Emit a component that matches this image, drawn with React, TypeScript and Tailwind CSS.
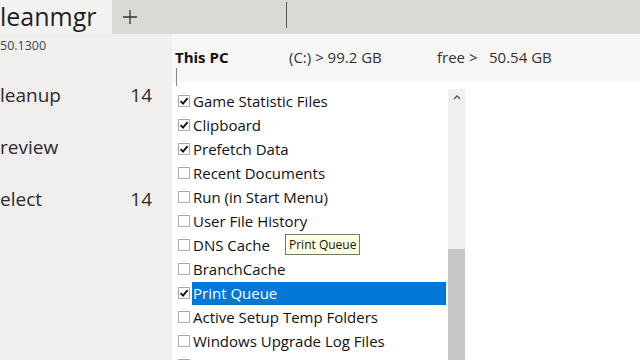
import React from 'react'

const ITEMS: { label: string; checked: boolean; selected?: boolean }[] = [
  { label: 'Game Statistic Files', checked: true },
  { label: 'Clipboard', checked: true },
  { label: 'Prefetch Data', checked: true },
  { label: 'Recent Documents', checked: false },
  { label: 'Run (in Start Menu)', checked: false },
  { label: 'User File History', checked: false },
  { label: 'DNS Cache', checked: false },
  { label: 'BranchCache', checked: false },
  { label: 'Print Queue', checked: true, selected: true },
  { label: 'Active Setup Temp Folders', checked: false },
  { label: 'Windows Upgrade Log Files', checked: false },
  { label: 'System Error Memory Dump Files', checked: false },
]

function Box({ checked }: { checked: boolean }) {
  return (
    <span className="w-[12px] h-[12px] border border-[#a9a9a9] bg-white flex items-center justify-center shrink-0">
      {checked && (
        <svg width="10" height="10" viewBox="0 0 10 10">
          <path d="M1.5 5.2 L4 7.6 L8.6 2.2" fill="none" stroke="#111" strokeWidth="1.8" />
        </svg>
      )}
    </span>
  )
}

function SideItem({ label, count }: { label: string; count?: string }) {
  return (
    <div className="h-[52px] flex items-center justify-between pr-[20px] text-[19px] text-[#2b2b2b]">
      <span>{label}</span>
      {count && <span>{count}</span>}
    </div>
  )
}

export default function App() {
  return (
    <div
      className="w-[640px] h-[360px] overflow-hidden flex flex-col bg-white"
      style={{ fontFamily: '"Open Sans", "Noto Sans", sans-serif' }}
    >
      {/* Tab strip */}
      <div className="h-[34px] bg-[#dad9d6] flex items-stretch shrink-0">
        <div className="w-[112px] bg-[#f3f2f1] flex items-center text-[25px] font-medium text-[#1f1f1f] leading-[34px] pb-[2px]">
          leanmgr
        </div>
        <div className="w-[36px] flex items-center justify-center">
          <svg width="16" height="16" viewBox="0 0 16 16">
            <path d="M8 1 V15 M1 8 H15" stroke="#333" strokeWidth="1.3" />
          </svg>
        </div>
        <div className="w-[138px]" />
        <div className="w-px bg-[#555] my-[2px] mb-[6px]" />
      </div>

      <div className="flex flex-1 min-h-0">
        {/* Sidebar */}
        <div className="w-[172px] bg-[#f0efed] flex flex-col shrink-0">
          <div className="h-[22px] flex items-center text-[12.5px] text-[#444] pt-[2px]">50.1300</div>
          <div className="h-[13px]" />
          <SideItem label="leanup" count="14" />
          <SideItem label="review" />
          <SideItem label="elect" count="14" />
        </div>

        {/* Main */}
        <div className="flex-1 flex flex-col min-w-0 bg-white">
          <div className="h-[48px] bg-[#f6f6f5] relative flex items-center text-[15px] text-[#333] pb-[1px]">
            <span className="font-bold text-[#111] ml-[3px] w-[114px]">This PC</span>
            <span className="w-[148px]">(C:) &gt; 99.2 GB</span>
            <span className="w-[52px]">free &gt;</span>
            <span>50.54 GB</span>
            <span className="absolute left-[4px] top-[34px] w-px h-[18px] bg-[#888]" />
          </div>
          <div className="h-[7px]" />
          <div className="flex flex-1 min-h-0">
            <div className="w-[274px] flex flex-col relative">
              {ITEMS.map((it) => (
                <div key={it.label} className="h-[24px] flex items-center shrink-0">
                  <div className="w-[20px] flex justify-end pr-[2px]">
                    <Box checked={it.checked} />
                  </div>
                  <div
                    className={
                      'flex-1 h-[23px] flex items-center pl-[1px] text-[15px] whitespace-nowrap ' +
                      (it.selected ? 'bg-[#0078d7] text-white' : 'text-[#111]')
                    }
                  >
                    {it.label}
                  </div>
                </div>
              ))}
              <div className="absolute left-[113px] top-[145px] bg-[#ffffe1] border border-[#767676] px-[3px] h-[21px] flex items-center text-[12px] text-[#111] whitespace-nowrap">
                Print Queue
              </div>
            </div>
            <div className="w-[17px] flex flex-col ml-[2px]">
              <div className="h-[160px] bg-[#efefef] flex justify-center pt-[5px]">
                <svg width="8" height="6" viewBox="0 0 8 6">
                  <path d="M1 5 L4 2 L7 5" fill="none" stroke="#555" strokeWidth="1.4" />
                </svg>
              </div>
              <div className="flex-1 bg-[#c6c6c6]" />
            </div>
          </div>
        </div>
      </div>
    </div>
  )
}
